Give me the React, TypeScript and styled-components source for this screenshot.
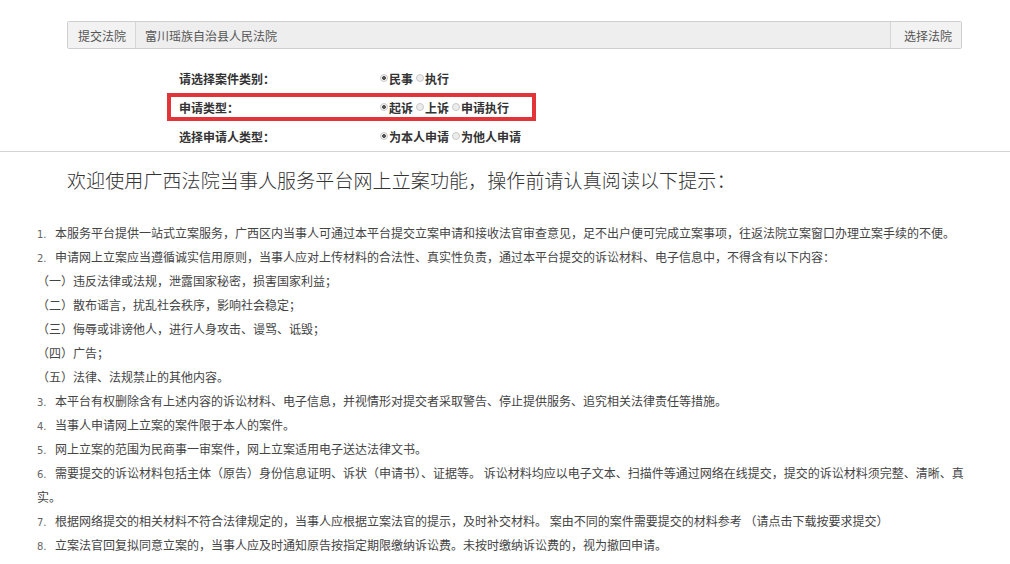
import React from "react";
import styled, { createGlobalStyle } from "styled-components";

const Global = createGlobalStyle`
  html, body { margin: 0; padding: 0; background: #fff; }
  body {
    font-family: "Liberation Sans", "Noto Sans CJK SC", sans-serif;
    color: #333;
    font-size: 12px;
  }
`;

const Page = styled.div`
  width: 1010px;
  height: 564px;
  overflow: hidden;
  padding-top: 21px;
  box-sizing: border-box;
`;

const CourtBar = styled.div`
  margin-left: 67px;
  width: 895px;
  height: 28px;
  box-sizing: border-box;
  border: 1px solid #cfcfcf;
  border-radius: 2px;
  background: #f0f0f0;
  display: flex;
  align-items: stretch;
  color: #555;
  font-size: 12px;
  font-family: "Noto Sans CJK SC", sans-serif;
  white-space: nowrap;
`;

const BarCell = styled.div<{ $side?: "left" | "right" }>`
  display: flex;
  align-items: center;
  flex: ${(p) => (p.$side ? "none" : "1")};
  width: ${(p) => (p.$side === "left" ? "68px" : p.$side === "right" ? "71px" : "auto")};
  box-sizing: border-box;
  border-right: ${(p) => (p.$side === "left" ? "1px solid #d6d6d6" : "none")};
  border-left: ${(p) => (p.$side === "right" ? "1px solid #d6d6d6" : "none")};
  background: ${(p) => (p.$side ? "#f2f2f2" : "#eeeeee")};
  padding-left: ${(p) => (p.$side === "right" ? "13px" : p.$side === "left" ? "10px" : "9px")};
`;

const FormArea = styled.div`
  margin-top: 15px;
  padding-bottom: 1px;
  border-bottom: 1px solid #d4d4d4;
  display: flex;
  flex-direction: column;
  gap: 1px;
`;

const FormRow = styled.div<{ $hl?: boolean }>`
  margin-left: 167px;
  width: 369px;
  height: 28px;
  box-sizing: border-box;
  border: 4px solid ${(p) => (p.$hl ? "#e3343a" : "transparent")};
  padding-left: 8px;
  display: grid;
  grid-template-columns: 201px 1fr;
  align-items: center;
  font-family: "Noto Sans CJK SC", sans-serif;
  font-weight: 700;
  font-size: 12px;
  color: #333;
`;

const Options = styled.div`
  display: flex;
  align-items: center;
  gap: 3px;
`;

const Option = styled.span`
  display: inline-flex;
  align-items: center;
  gap: 1px;
`;

const Radio = styled.span<{ $on?: boolean }>`
  width: 8px;
  height: 8px;
  border-radius: 50%;
  box-sizing: border-box;
  border: 1px solid #c8c8c8;
  background: ${(p) => (p.$on ? "radial-gradient(circle, #555 0 1.6px, #f4f4f4 2.2px)" : "#ececec")};
  display: inline-block;
`;

const Heading = styled.h1`
  margin: 18px 0 0 67px;
  font-family: "Noto Sans CJK SC", sans-serif;
  font-weight: 300;
  font-size: 19px;
  line-height: 20px;
  color: #333;
  letter-spacing: 0.1px;
`;

const Notice = styled.div`
  margin: 31px 0 0 37px;
  width: 940px;
  font-family: "Noto Sans CJK SC", sans-serif;
  font-size: 12px;
  line-height: 24px;
  color: #444;
`;

const Item = styled.p`
  margin: 0;
`;

const Num = styled.span`
  display: inline-block;
  width: 18px;
  vertical-align: baseline;
  line-height: 1;
  font-family: "DejaVu Sans", sans-serif;
  font-size: 10px;
  color: #666;
`;

type Opt = { label: string; on?: boolean };
const rows: { label: string; opts: Opt[]; hl?: boolean }[] = [
  { label: "请选择案件类别：", opts: [{ label: "民事", on: true }, { label: "执行" }] },
  {
    label: "申请类型：",
    hl: true,
    opts: [{ label: "起诉", on: true }, { label: "上诉" }, { label: "申请执行" }],
  },
  { label: "选择申请人类型：", opts: [{ label: "为本人申请", on: true }, { label: "为他人申请" }] },
];

const items: { n?: string; t: string }[] = [
  { n: "1.", t: "本服务平台提供一站式立案服务，广西区内当事人可通过本平台提交立案申请和接收法官审查意见，足不出户便可完成立案事项，往返法院立案窗口办理立案手续的不便。" },
  { n: "2.", t: "申请网上立案应当遵循诚实信用原则，当事人应对上传材料的合法性、真实性负责，通过本平台提交的诉讼材料、电子信息中，不得含有以下内容：" },
  { t: "（一）违反法律或法规，泄露国家秘密，损害国家利益；" },
  { t: "（二）散布谣言，扰乱社会秩序，影响社会稳定；" },
  { t: "（三）侮辱或诽谤他人，进行人身攻击、谩骂、诋毁；" },
  { t: "（四）广告；" },
  { t: "（五）法律、法规禁止的其他内容。" },
  { n: "3.", t: "本平台有权删除含有上述内容的诉讼材料、电子信息，并视情形对提交者采取警告、停止提供服务、追究相关法律责任等措施。" },
  { n: "4.", t: "当事人申请网上立案的案件限于本人的案件。" },
  { n: "5.", t: "网上立案的范围为民商事一审案件，网上立案适用电子送达法律文书。" },
  { n: "6.", t: "需要提交的诉讼材料包括主体（原告）身份信息证明、诉状（申请书）、证据等。 诉讼材料均应以电子文本、扫描件等通过网络在线提交，提交的诉讼材料须完整、清晰、真实。" },
  { n: "7.", t: "根据网络提交的相关材料不符合法律规定的，当事人应根据立案法官的提示，及时补交材料。 案由不同的案件需要提交的材料参考 （请点击下载按要求提交）" },
  { n: "8.", t: "立案法官回复拟同意立案的，当事人应及时通知原告按指定期限缴纳诉讼费。未按时缴纳诉讼费的，视为撤回申请。" },
];

export default function App() {
  return (
    <>
      <Global />
      <Page>
        <CourtBar>
          <BarCell $side="left">提交法院</BarCell>
          <BarCell>富川瑶族自治县人民法院</BarCell>
          <BarCell $side="right">选择法院</BarCell>
        </CourtBar>
        <FormArea>
          {rows.map((r) => (
            <FormRow key={r.label} $hl={r.hl}>
              <span>{r.label}</span>
              <Options>
                {r.opts.map((o) => (
                  <Option key={o.label}>
                    <Radio $on={o.on} />
                    {o.label}
                  </Option>
                ))}
              </Options>
            </FormRow>
          ))}
        </FormArea>
        <Heading>欢迎使用广西法院当事人服务平台网上立案功能，操作前请认真阅读以下提示：</Heading>
        <Notice>
          {items.map((it, i) => (
            <Item key={i}>
              {it.n && <Num>{it.n}</Num>}
              {it.t}
            </Item>
          ))}
        </Notice>
      </Page>
    </>
  );
}
